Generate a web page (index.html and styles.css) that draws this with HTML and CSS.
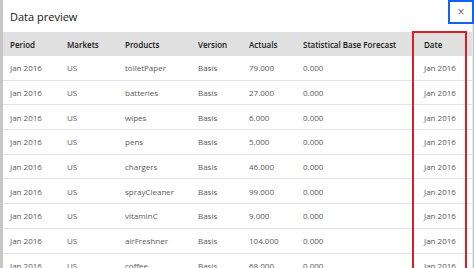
FILE: index.html
```html
<!DOCTYPE html>
<html lang="en">
<head>
    <meta charset="UTF-8">
    <title>Data preview</title>
    <link rel="stylesheet" href="styles.css">
</head>
<body>
    <div class="modal">
        <div class="modal-header">
            <h2>Data preview</h2>
            <button class="close" aria-label="Close">&times;</button>
        </div>

        <div class="table">
            <div class="row head">
                <span>Period</span><span>Markets</span><span>Products</span><span>Version</span><span>Actuals</span><span>Statistical Base Forecast</span><span>Date</span>
            </div>
            <div class="row"><span>Jan 2016</span><span>US</span><span>toiletPaper</span><span>Basis</span><span>79.000</span><span>0.000</span><span>Jan 2016</span></div>
            <div class="row"><span>Jan 2016</span><span>US</span><span>batteries</span><span>Basis</span><span>27.000</span><span>0.000</span><span>Jan 2016</span></div>
            <div class="row"><span>Jan 2016</span><span>US</span><span>wipes</span><span>Basis</span><span>6.000</span><span>0.000</span><span>Jan 2016</span></div>
            <div class="row"><span>Jan 2016</span><span>US</span><span>pens</span><span>Basis</span><span>5.000</span><span>0.000</span><span>Jan 2016</span></div>
            <div class="row"><span>Jan 2016</span><span>US</span><span>chargers</span><span>Basis</span><span>46.000</span><span>0.000</span><span>Jan 2016</span></div>
            <div class="row"><span>Jan 2016</span><span>US</span><span>sprayCleaner</span><span>Basis</span><span>99.000</span><span>0.000</span><span>Jan 2016</span></div>
            <div class="row"><span>Jan 2016</span><span>US</span><span>vitaminC</span><span>Basis</span><span>9.000</span><span>0.000</span><span>Jan 2016</span></div>
            <div class="row"><span>Jan 2016</span><span>US</span><span>airFreshner</span><span>Basis</span><span>104.000</span><span>0.000</span><span>Jan 2016</span></div>
            <div class="row"><span>Jan 2016</span><span>US</span><span>coffee</span><span>Basis</span><span>68.000</span><span>0.000</span><span>Jan 2016</span></div>
        </div>

        <div class="highlight"></div>
    </div>
</body>
</html>
```

FILE: styles.css
```css
body {
    margin: 0;
    background: #c6c6c6;
    font-family: "Open Sans", "Liberation Sans", sans-serif;
    overflow: hidden;
}
.modal {
    position: relative;
    margin-left: 3px;
    width: 469px;
    height: 268px;
    background: #fff;
    border-right: 1px solid #e6e6e6;
}
.modal-header {
    height: 32px;
    display: flex;
    align-items: center;
    padding-left: 7px;
}
.modal-header h2 {
    margin: 0;
    font-size: 11px;
    font-weight: 400;
    color: #161616;
}
.close {
    position: absolute;
    top: 0;
    right: -2px;
    width: 26px;
    height: 24px;
    border: 2px solid #0f62fe;
    background: #fff;
    color: #161616;
    font-family: "DejaVu Sans", sans-serif;
    font-size: 10px;
    font-weight: 300;
    line-height: 1;
    padding: 0;
}
.row {
    display: grid;
    grid-template-columns: 57px 58px 73px 51px 54px 121px 1fr;
    align-items: center;
    height: 24.7px;
    box-sizing: border-box;
    padding-left: 7px;
    border-bottom: 1px solid #e5e5e5;
    font-size: 8px;
    color: #5a5a5a;
    white-space: nowrap;
}
.row.head {
    height: 24px;
    background: #e0e0e0;
    border-bottom: none;
    font-weight: 600;
    color: #161616;
}
.highlight {
    position: absolute;
    left: 409px;
    top: 31px;
    width: 55px;
    height: 250px;
    border: 2px solid #da1e28;
    box-sizing: border-box;
}
```
